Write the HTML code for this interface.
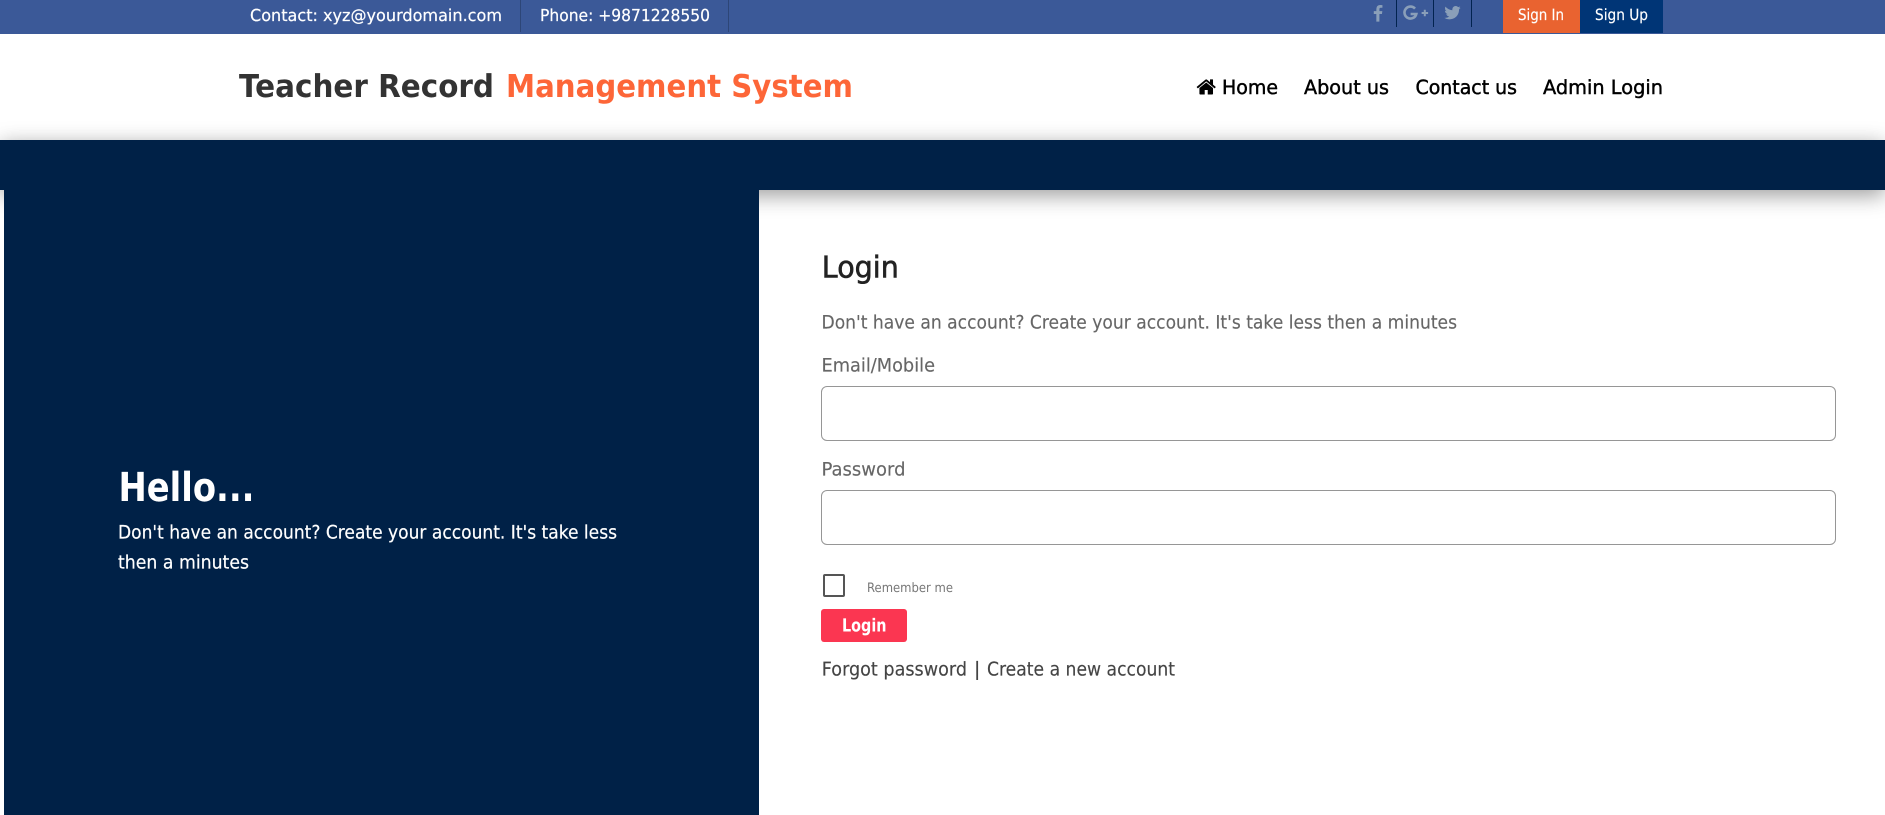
<!DOCTYPE html>
<html lang="en">
<head>
<meta charset="utf-8">
<title>Teacher Record Management System</title>
<style>
html,body{margin:0;padding:0;width:1885px;height:815px;overflow:hidden;background:#fff}
.box{position:absolute;display:block;box-sizing:border-box}
input.box{background:#fff;border:1px solid #969696;border-radius:6px;padding:0;margin:0;outline:0}
#ov{position:absolute;left:0;top:0;pointer-events:none}
text{font-family:"DejaVu Sans","Liberation Sans",sans-serif;text-rendering:geometricPrecision}
.db{font-family:"DejaVu Sans",sans-serif;font-weight:700}
</style>
</head>
<body>
<div class="box" style="left:0;top:34px;width:1885px;height:106px;background:#fff"></div>
<div class="box" style="left:0;top:0;width:1885px;height:34px;background:#3b5998"></div>
<div class="box" style="left:520px;top:0;width:1px;height:32px;background:#2d4677"></div>
<div class="box" style="left:728px;top:0;width:1px;height:32px;background:#2d4677"></div>
<div class="box" style="left:1396px;top:0;width:1px;height:27px;background:#02234f"></div>
<div class="box" style="left:1433px;top:0;width:1px;height:27px;background:#02234f"></div>
<div class="box" style="left:1471px;top:0;width:1px;height:27px;background:#02234f"></div>
<div class="box" style="left:1503px;top:0;width:77px;height:33px;background:#e96330"></div>
<div class="box" style="left:1580px;top:0;width:83px;height:33px;background:#003576"></div>

<div class="box" style="left:0;top:140px;width:1885px;height:50px;background:#002147;box-shadow:0 5px 22px rgba(0,0,0,.4)"></div>
<div class="box" style="left:4px;top:190px;width:755px;height:625px;background:#002147"></div>

<input class="box" type="text" style="left:821px;top:386px;width:1015px;height:55px">
<input class="box" type="password" style="left:821px;top:490px;width:1015px;height:55px">
<div class="box" style="left:823px;top:574px;width:22px;height:23px;border:2px solid #555;border-radius:2px;background:#fff"></div>
<div class="box" style="left:821px;top:609px;width:86px;height:33px;background:#fb3651;border-radius:3px"></div>

<svg id="ov" width="1885" height="815" viewBox="0 0 1885 815" xmlns="http://www.w3.org/2000/svg">
  <g stroke="#fff" stroke-width=".2" fill="#fff">
  <text x="250" y="21" font-size="16.5" textLength="252" lengthAdjust="spacingAndGlyphs">Contact: xyz@yourdomain.com</text>
  <text x="540" y="21" font-size="16.5" textLength="170" lengthAdjust="spacingAndGlyphs">Phone: +9871228550</text>
  </g>

  <g fill="#8a9fb9">
    <path transform="translate(1369 5) scale(.01)" d="M1343 12v264h-157q-86 0-116 36t-30 108v189h293l-39 296h-254v759h-306v-759h-255v-296h255v-218q0-186 104-288.5t277-102.5q147 0 228 12z"/>
    <path d="M1415 8.6A6 6 0 1 0 1416.3 14H1410.6" fill="none" stroke="#8a9fb9" stroke-width="2.6"/>
    <path d="M1421.6 12h2.2v-2.2h2v2.2h2.3v2h-2.3v2.2h-2v-2.2h-2.2z"/>
    <path transform="translate(1443.2 3.4) scale(.0104)" d="M1684 408q-67 98-162 167 1 14 1 42 0 130-38 259.5t-115.5 248.5-184.5 210.5-258 146-323 54.5q-271 0-496-145 35 4 78 4 225 0 401-138-105-2-188-64.5t-114-159.5q33 5 61 5 43 0 85-11-112-23-185.5-111.5t-73.5-205.5v-4q68 38 146 41-66-44-105-115t-39-154q0-88 44-163 121 149 294.5 238.5t371.5 99.5q-8-38-8-74 0-134 94.5-228.5t228.5-94.5q140 0 236 102 109-21 201-76-21 114-138 189 97-11 186-48z"/>
  </g>

  <g stroke="#fff" stroke-width=".15" fill="#fff">
  <text x="1518" y="20" font-size="15.5" textLength="46" lengthAdjust="spacingAndGlyphs">Sign In</text>
  <text x="1595" y="20" font-size="15.5" textLength="53" lengthAdjust="spacingAndGlyphs">Sign Up</text>
  </g>

  <text class="db" x="239" y="97" font-size="31.5" fill="#333" textLength="255" lengthAdjust="spacingAndGlyphs">Teacher Record</text>
  <text class="db" x="506" y="97" font-size="31.5" fill="#fd6638" textLength="347" lengthAdjust="spacingAndGlyphs">Management System</text>

  <path fill="#000" transform="translate(1196.4 76.4) scale(.0118)" d="M1408 992v480q0 26-19 45t-45 19h-384v-384h-256v384h-384q-26 0-45-19t-19-45v-480q0-1 .5-3t.5-3l575-474 575 474q1 2 1 6zm223-69l-62 74q-8 9-21 11h-3q-13 0-21-7l-692-577-692 577q-12 8-24 7-13-2-21-11l-62-74q-8-10-7-23.5t11-20.5l719-599q32-26 76-26t76 26l244 204v-195q0-14 9-23t23-9h192q14 0 23 9t9 23v408l219 182q10 8 11 21.5t-7 23.5z"/>
  <g font-size="19.5" fill="#000" stroke="#000" stroke-width=".45">
    <text x="1222" y="94" textLength="56" lengthAdjust="spacingAndGlyphs">Home</text>
    <text x="1304" y="94" textLength="85" lengthAdjust="spacingAndGlyphs">About us</text>
    <text x="1415.5" y="94" textLength="101.5" lengthAdjust="spacingAndGlyphs">Contact us</text>
    <text x="1543" y="94" textLength="120" lengthAdjust="spacingAndGlyphs">Admin Login</text>
  </g>

  <text class="db" x="118.5" y="501" font-size="40" fill="#fff" textLength="136" lengthAdjust="spacingAndGlyphs">Hello...</text>
  <g fill="#fff" stroke="#fff" stroke-width=".2" font-size="18.5">
  <text x="118" y="538.5" textLength="499" lengthAdjust="spacingAndGlyphs">Don't have an account? Create your account. It's take less</text>
  <text x="118" y="568.5" textLength="131" lengthAdjust="spacingAndGlyphs">then a minutes</text>
  </g>

  <text x="821.8" y="277.5" font-size="30" fill="#222" stroke="#222" stroke-width=".6" textLength="77" lengthAdjust="spacingAndGlyphs">Login</text>
  <g fill="#666" stroke="#666" stroke-width=".15" font-size="18.5">
  <text x="821.5" y="328.5" textLength="635.5" lengthAdjust="spacingAndGlyphs">Don't have an account? Create your account. It's take less then a minutes</text>
  <text x="821.5" y="371.5" textLength="113.5" lengthAdjust="spacingAndGlyphs">Email/Mobile</text>
  <text x="821.5" y="475.5" textLength="84" lengthAdjust="spacingAndGlyphs">Password</text>
  </g>
  <text x="867" y="592" font-size="13" fill="#777" textLength="86" lengthAdjust="spacingAndGlyphs">Remember me</text>
  <text class="db" x="842" y="631.5" font-size="18" fill="#fff" textLength="44.5" lengthAdjust="spacingAndGlyphs">Login</text>
  <g fill="#444" stroke="#444" stroke-width=".15" font-size="19">
  <text x="821.8" y="675.5" textLength="145.2" lengthAdjust="spacingAndGlyphs">Forgot password</text>
  <text x="974" y="675.5">|</text>
  <text x="987" y="675.5" textLength="188" lengthAdjust="spacingAndGlyphs">Create a new account</text>
  </g>
</svg>
</body>
</html>
